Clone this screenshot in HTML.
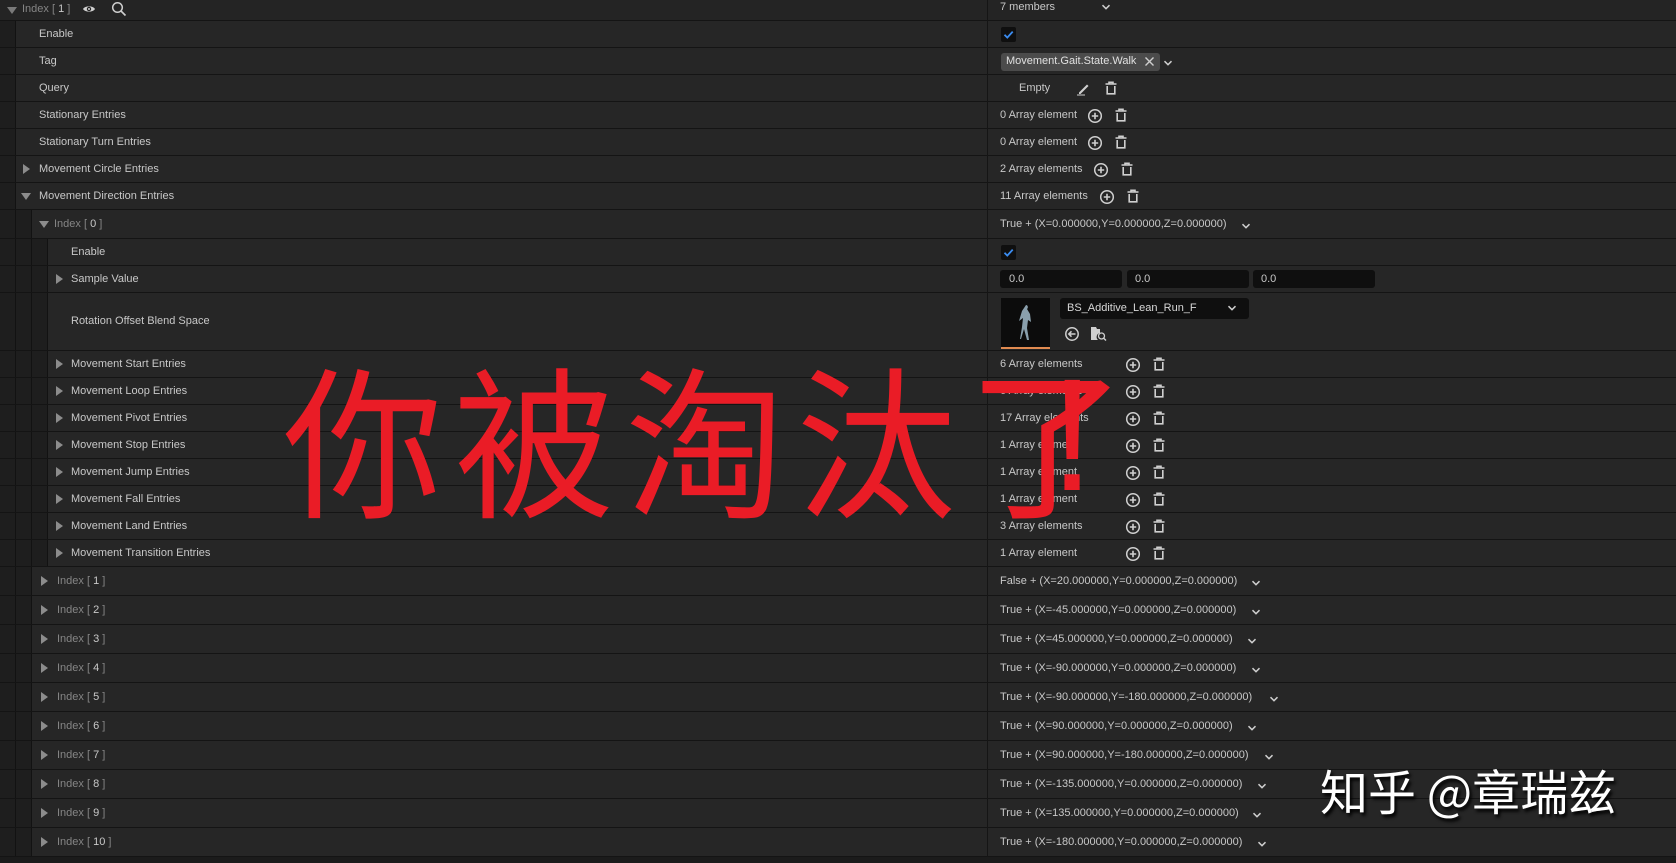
<!DOCTYPE html>
<html><head><meta charset="utf-8"><style>
body{margin:0;width:1676px;height:863px;background:#1b1b1b;overflow:hidden;position:relative;font-family:"Liberation Sans","Noto Sans CJK SC",sans-serif;font-size:11px;color:#c8c8c8}
.r{position:absolute;left:0;width:1676px;background:#262626;border-top:1px solid #141414;box-sizing:border-box}
.ind{position:absolute;left:0;top:0;bottom:0;background:repeating-linear-gradient(90deg,#1e1e1e 0 15px,#121212 15px 16px)}
.l{position:absolute;white-space:nowrap}
.v{position:absolute;left:1000px;white-space:nowrap}
.tri{position:absolute;width:0;height:0;border-top:5px solid transparent;border-bottom:5px solid transparent;border-left:7px solid #8c8c8c}
.trd{position:absolute;width:0;height:0;border-left:5px solid transparent;border-right:5px solid transparent;border-top:7px solid #8c8c8c}
.ix{color:#858585}.ix b{font-weight:normal;color:#c8c8c8}
svg{position:absolute}
.div{position:absolute;left:987px;top:0;width:1px;height:857px;background:#151515}
</style></head><body>
<svg width="0" height="0"><defs>
<symbol id="pl" viewBox="0 0 16 16"><circle cx="8" cy="8" r="6.3" fill="none" stroke="#cfcfcf" stroke-width="1.5"/><path d="M8 4.8v6.4M4.8 8h6.4" stroke="#cfcfcf" stroke-width="1.6"/></symbol>
<symbol id="tr" viewBox="0 0 16 16"><path d="M2.5 4h11M6 4V2.3h4V4M4.2 6v7.8h7.6V6" fill="none" stroke="#cfcfcf" stroke-width="1.6"/></symbol>
<symbol id="ch" viewBox="0 0 12 12"><path d="M2.5 4.2L6 7.7l3.5-3.5" fill="none" stroke="#cfcfcf" stroke-width="1.5"/></symbol>
</defs></svg>

<div class="r" style="top:0;height:20px;border-top:none;background:#242424">
<div class="trd" style="left:7px;top:7px;border-top-color:#7a7a7a"></div>
<span class="l ix" style="left:22px;top:3px">Index [ <b>1</b> ]</span>
<svg style="left:82px;top:3px" width="14" height="12" viewBox="0 0 14 12"><path d="M1 6C3 2.5 11 2.5 13 6C11 9.5 3 9.5 1 6Z" fill="#cfcfcf"/><circle cx="7" cy="6" r="2.2" fill="#242424"/><circle cx="7" cy="6" r="1" fill="#cfcfcf"/></svg>
<svg style="left:111px;top:1px" width="16" height="16" viewBox="0 0 16 16"><circle cx="6.5" cy="6.5" r="4.8" fill="none" stroke="#cfcfcf" stroke-width="1.5"/><path d="M10 10l4.5 4.5" stroke="#cfcfcf" stroke-width="1.6"/></svg>
<span class="v" style="top:1px">7 members</span>
<svg style="left:1100px;top:1px" width="12" height="12"><use href="#ch"/></svg>
</div>

<div class="r" style="top:20px;height:27px"><div class="ind" style="width:16px"></div><span class="l" style="left:39px;top:7px">Enable</span>
<div style="position:absolute;left:1001px;top:6px;width:15px;height:15px;background:#0f0f0f;border-radius:2px"></div>
<svg style="left:1002px;top:7px" width="13" height="13" viewBox="0 0 13 13"><path d="M2.5 6.8l2.8 2.8 5.4-6" fill="none" stroke="#3b8cf0" stroke-width="1.8"/></svg></div>
<div class="r" style="top:47px;height:27px"><div class="ind" style="width:16px"></div><span class="l" style="left:39px;top:7px">Tag</span>
<div style="position:absolute;left:1001px;top:5px;width:159px;height:18px;background:#4b4b4b;border-radius:3px"></div>
<span class="v" style="left:1006px;top:7px;color:#e0e0e0">Movement.Gait.State.Walk</span>
<svg style="left:1144px;top:8px" width="11" height="11" viewBox="0 0 11 11"><path d="M1.5 1.5l8 8M9.5 1.5l-8 8" stroke="#cfcfcf" stroke-width="1.4"/></svg>
<svg style="left:1162px;top:9px" width="12" height="12"><use href="#ch"/></svg></div>
<div class="r" style="top:74px;height:27px"><div class="ind" style="width:16px"></div><span class="l" style="left:39px;top:7px">Query</span>
<span class="v" style="left:1019px;top:7px">Empty</span>
<svg style="left:1076px;top:6px" width="15" height="15" viewBox="0 0 15 15"><path d="M3 11.5L11 3.5l1.5 1.5L4.5 13H3z" fill="#cfcfcf"/><path d="M1 14h8" stroke="#cfcfcf"/></svg>
<svg style="left:1103px;top:5px" width="16" height="16"><use href="#tr"/></svg></div>
<div class="r" style="top:101px;height:27px"><div class="ind" style="width:16px"></div><span class="l" style="left:39px;top:7px">Stationary Entries</span>
<span class="v" style="top:7px">0 Array element</span>
<svg style="left:1087px;top:6px" width="16" height="16"><use href="#pl"/></svg><svg style="left:1113px;top:5px" width="16" height="16"><use href="#tr"/></svg></div>
<div class="r" style="top:128px;height:27px"><div class="ind" style="width:16px"></div><span class="l" style="left:39px;top:7px">Stationary Turn Entries</span>
<span class="v" style="top:7px">0 Array element</span>
<svg style="left:1087px;top:6px" width="16" height="16"><use href="#pl"/></svg><svg style="left:1113px;top:5px" width="16" height="16"><use href="#tr"/></svg></div>
<div class="r" style="top:155px;height:27px"><div class="ind" style="width:16px"></div><div class="tri" style="left:23px;top:8px"></div><span class="l" style="left:39px;top:7px">Movement Circle Entries</span>
<span class="v" style="top:7px">2 Array elements</span>
<svg style="left:1093px;top:6px" width="16" height="16"><use href="#pl"/></svg><svg style="left:1119px;top:5px" width="16" height="16"><use href="#tr"/></svg></div>
<div class="r" style="top:182px;height:27px"><div class="ind" style="width:16px"></div><div class="trd" style="left:21px;top:10px"></div><span class="l" style="left:39px;top:7px">Movement Direction Entries</span>
<span class="v" style="top:7px">11 Array elements</span>
<svg style="left:1099px;top:6px" width="16" height="16"><use href="#pl"/></svg><svg style="left:1125px;top:5px" width="16" height="16"><use href="#tr"/></svg></div>

<div class="r" style="top:209px;height:29px"><div class="ind" style="width:32px"></div><div class="trd" style="left:39px;top:11px"></div><span class="l ix" style="left:54px;top:8px">Index [ <b>0</b> ]</span>
<span class="v" style="top:8px">True + (X=0.000000,Y=0.000000,Z=0.000000)</span><svg style="left:1240px;top:10px" width="12" height="12"><use href="#ch"/></svg></div>

<div class="r" style="top:238px;height:27px"><div class="ind" style="width:48px"></div><span class="l" style="left:71px;top:7px">Enable</span>
<div style="position:absolute;left:1001px;top:6px;width:15px;height:15px;background:#0f0f0f;border-radius:2px"></div>
<svg style="left:1002px;top:7px" width="13" height="13" viewBox="0 0 13 13"><path d="M2.5 6.8l2.8 2.8 5.4-6" fill="none" stroke="#3b8cf0" stroke-width="1.8"/></svg></div>
<div class="r" style="top:265px;height:27px"><div class="ind" style="width:48px"></div><div class="tri" style="left:56px;top:8px"></div><span class="l" style="left:71px;top:7px">Sample Value</span>
<div style="position:absolute;left:1000px;top:4px;width:122px;height:18px;background:#0f0f0f;border-radius:3px"></div>
<div style="position:absolute;left:1127px;top:4px;width:122px;height:18px;background:#0f0f0f;border-radius:3px"></div>
<div style="position:absolute;left:1253px;top:4px;width:122px;height:18px;background:#0f0f0f;border-radius:3px"></div>
<span class="v" style="left:1009px;top:7px">0.0</span><span class="v" style="left:1135px;top:7px">0.0</span><span class="v" style="left:1261px;top:7px">0.0</span></div>
<div class="r" style="top:292px;height:58px"><div class="ind" style="width:48px"></div><span class="l" style="left:71px;top:22px">Rotation Offset Blend Space</span>
<div style="position:absolute;left:1001px;top:5px;width:49px;height:49px;background:#0c0c0c;border-bottom:2px solid #e08a50"></div>
<svg style="left:1014px;top:10px" width="24" height="40" viewBox="0 0 24 40"><path d="M12 2c2 0 2.5 3 1 4l3 5 1 8-3-2-1 8 2 12h-2l-3-11-3 10H6l2-12 1-9-4 3 3-10z" fill="#8aa0ad"/></svg>
<div style="position:absolute;left:1060px;top:5px;width:189px;height:21px;background:#0f0f0f;border-radius:3px"></div>
<span class="v" style="left:1067px;top:9px;color:#d8d8d8">BS_Additive_Lean_Run_F</span><svg style="left:1226px;top:9px" width="12" height="12"><use href="#ch"/></svg>
<svg style="left:1064px;top:33px" width="16" height="16" viewBox="0 0 16 16"><circle cx="8" cy="8" r="6.2" fill="none" stroke="#cfcfcf" stroke-width="1.5"/><path d="M11.5 8H5M7.5 5.3L4.8 8l2.7 2.7" fill="none" stroke="#cfcfcf" stroke-width="1.5"/></svg>
<svg style="left:1090px;top:32px" width="17" height="17" viewBox="0 0 17 17"><path d="M1 2h5l1 2h3v4a4 4 0 0 0-2 7H1z" fill="#cfcfcf"/><circle cx="11.5" cy="11" r="3" fill="none" stroke="#cfcfcf" stroke-width="1.3"/><path d="M13.5 13l2.5 2.5" stroke="#cfcfcf" stroke-width="1.4"/></svg></div>

<div class="r" style="top:350px;height:27px"><div class="ind" style="width:48px"></div><div class="tri" style="left:56px;top:8px"></div><span class="l" style="left:71px;top:7px">Movement Start Entries</span><span class="v" style="top:7px">6 Array elements</span><svg style="left:1125px;top:6px" width="16" height="16"><use href="#pl"/></svg><svg style="left:1151px;top:5px" width="16" height="16"><use href="#tr"/></svg></div>
<div class="r" style="top:377px;height:27px"><div class="ind" style="width:48px"></div><div class="tri" style="left:56px;top:8px"></div><span class="l" style="left:71px;top:7px">Movement Loop Entries</span><span class="v" style="top:7px">6 Array elements</span><svg style="left:1125px;top:6px" width="16" height="16"><use href="#pl"/></svg><svg style="left:1151px;top:5px" width="16" height="16"><use href="#tr"/></svg></div>
<div class="r" style="top:404px;height:27px"><div class="ind" style="width:48px"></div><div class="tri" style="left:56px;top:8px"></div><span class="l" style="left:71px;top:7px">Movement Pivot Entries</span><span class="v" style="top:7px">17 Array elements</span><svg style="left:1125px;top:6px" width="16" height="16"><use href="#pl"/></svg><svg style="left:1151px;top:5px" width="16" height="16"><use href="#tr"/></svg></div>
<div class="r" style="top:431px;height:27px"><div class="ind" style="width:48px"></div><div class="tri" style="left:56px;top:8px"></div><span class="l" style="left:71px;top:7px">Movement Stop Entries</span><span class="v" style="top:7px">1 Array element</span><svg style="left:1125px;top:6px" width="16" height="16"><use href="#pl"/></svg><svg style="left:1151px;top:5px" width="16" height="16"><use href="#tr"/></svg></div>
<div class="r" style="top:458px;height:27px"><div class="ind" style="width:48px"></div><div class="tri" style="left:56px;top:8px"></div><span class="l" style="left:71px;top:7px">Movement Jump Entries</span><span class="v" style="top:7px">1 Array element</span><svg style="left:1125px;top:6px" width="16" height="16"><use href="#pl"/></svg><svg style="left:1151px;top:5px" width="16" height="16"><use href="#tr"/></svg></div>
<div class="r" style="top:485px;height:27px"><div class="ind" style="width:48px"></div><div class="tri" style="left:56px;top:8px"></div><span class="l" style="left:71px;top:7px">Movement Fall Entries</span><span class="v" style="top:7px">1 Array element</span><svg style="left:1125px;top:6px" width="16" height="16"><use href="#pl"/></svg><svg style="left:1151px;top:5px" width="16" height="16"><use href="#tr"/></svg></div>
<div class="r" style="top:512px;height:27px"><div class="ind" style="width:48px"></div><div class="tri" style="left:56px;top:8px"></div><span class="l" style="left:71px;top:7px">Movement Land Entries</span><span class="v" style="top:7px">3 Array elements</span><svg style="left:1125px;top:6px" width="16" height="16"><use href="#pl"/></svg><svg style="left:1151px;top:5px" width="16" height="16"><use href="#tr"/></svg></div>
<div class="r" style="top:539px;height:27px"><div class="ind" style="width:48px"></div><div class="tri" style="left:56px;top:8px"></div><span class="l" style="left:71px;top:7px">Movement Transition Entries</span><span class="v" style="top:7px">1 Array element</span><svg style="left:1125px;top:6px" width="16" height="16"><use href="#pl"/></svg><svg style="left:1151px;top:5px" width="16" height="16"><use href="#tr"/></svg></div>

<div class="r" style="top:566px;height:29px"><div class="ind" style="width:32px"></div><div class="tri" style="left:41px;top:9px"></div><span class="l ix" style="left:57px;top:8px">Index [ <b>1</b> ]</span><span class="v" style="top:8px">False + (X=20.000000,Y=0.000000,Z=0.000000)</span><svg style="left:1250px;top:10px" width="12" height="12"><use href="#ch"/></svg></div>
<div class="r" style="top:595px;height:29px"><div class="ind" style="width:32px"></div><div class="tri" style="left:41px;top:9px"></div><span class="l ix" style="left:57px;top:8px">Index [ <b>2</b> ]</span><span class="v" style="top:8px">True + (X=-45.000000,Y=0.000000,Z=0.000000)</span><svg style="left:1250px;top:10px" width="12" height="12"><use href="#ch"/></svg></div>
<div class="r" style="top:624px;height:29px"><div class="ind" style="width:32px"></div><div class="tri" style="left:41px;top:9px"></div><span class="l ix" style="left:57px;top:8px">Index [ <b>3</b> ]</span><span class="v" style="top:8px">True + (X=45.000000,Y=0.000000,Z=0.000000)</span><svg style="left:1246px;top:10px" width="12" height="12"><use href="#ch"/></svg></div>
<div class="r" style="top:653px;height:29px"><div class="ind" style="width:32px"></div><div class="tri" style="left:41px;top:9px"></div><span class="l ix" style="left:57px;top:8px">Index [ <b>4</b> ]</span><span class="v" style="top:8px">True + (X=-90.000000,Y=0.000000,Z=0.000000)</span><svg style="left:1250px;top:10px" width="12" height="12"><use href="#ch"/></svg></div>
<div class="r" style="top:682px;height:29px"><div class="ind" style="width:32px"></div><div class="tri" style="left:41px;top:9px"></div><span class="l ix" style="left:57px;top:8px">Index [ <b>5</b> ]</span><span class="v" style="top:8px">True + (X=-90.000000,Y=-180.000000,Z=0.000000)</span><svg style="left:1268px;top:10px" width="12" height="12"><use href="#ch"/></svg></div>
<div class="r" style="top:711px;height:29px"><div class="ind" style="width:32px"></div><div class="tri" style="left:41px;top:9px"></div><span class="l ix" style="left:57px;top:8px">Index [ <b>6</b> ]</span><span class="v" style="top:8px">True + (X=90.000000,Y=0.000000,Z=0.000000)</span><svg style="left:1246px;top:10px" width="12" height="12"><use href="#ch"/></svg></div>
<div class="r" style="top:740px;height:29px"><div class="ind" style="width:32px"></div><div class="tri" style="left:41px;top:9px"></div><span class="l ix" style="left:57px;top:8px">Index [ <b>7</b> ]</span><span class="v" style="top:8px">True + (X=90.000000,Y=-180.000000,Z=0.000000)</span><svg style="left:1263px;top:10px" width="12" height="12"><use href="#ch"/></svg></div>
<div class="r" style="top:769px;height:29px"><div class="ind" style="width:32px"></div><div class="tri" style="left:41px;top:9px"></div><span class="l ix" style="left:57px;top:8px">Index [ <b>8</b> ]</span><span class="v" style="top:8px">True + (X=-135.000000,Y=0.000000,Z=0.000000)</span><svg style="left:1256px;top:10px" width="12" height="12"><use href="#ch"/></svg></div>
<div class="r" style="top:798px;height:29px"><div class="ind" style="width:32px"></div><div class="tri" style="left:41px;top:9px"></div><span class="l ix" style="left:57px;top:8px">Index [ <b>9</b> ]</span><span class="v" style="top:8px">True + (X=135.000000,Y=0.000000,Z=0.000000)</span><svg style="left:1251px;top:10px" width="12" height="12"><use href="#ch"/></svg></div>
<div class="r" style="top:827px;height:30px;border-bottom:1px solid #141414"><div class="ind" style="width:32px"></div><div class="tri" style="left:41px;top:9px"></div><span class="l ix" style="left:57px;top:8px">Index [ <b>10</b> ]</span><span class="v" style="top:8px">True + (X=-180.000000,Y=0.000000,Z=0.000000)</span><svg style="left:1256px;top:10px" width="12" height="12"><use href="#ch"/></svg></div>

<div class="div"></div>

<div style="position:absolute;left:283px;top:340px;font-family:'Noto Sans CJK SC',sans-serif;font-size:160px;line-height:190px;color:#ea1c26;white-space:nowrap;letter-spacing:11px;transform:scaleY(1.02)">你被淘汰了</div>
<div style="position:absolute;left:1050px;top:340px;font-family:'Liberation Sans',sans-serif;font-size:160px;line-height:190px;color:#ea1c26">!</div>

<div style="position:absolute;left:1320px;top:758px;font-family:'Noto Sans CJK SC',sans-serif;font-size:48px;line-height:62px;color:#fff;white-space:nowrap;text-shadow:2px 3px 3px #000">知乎 @章瑞兹</div>
</body></html>
